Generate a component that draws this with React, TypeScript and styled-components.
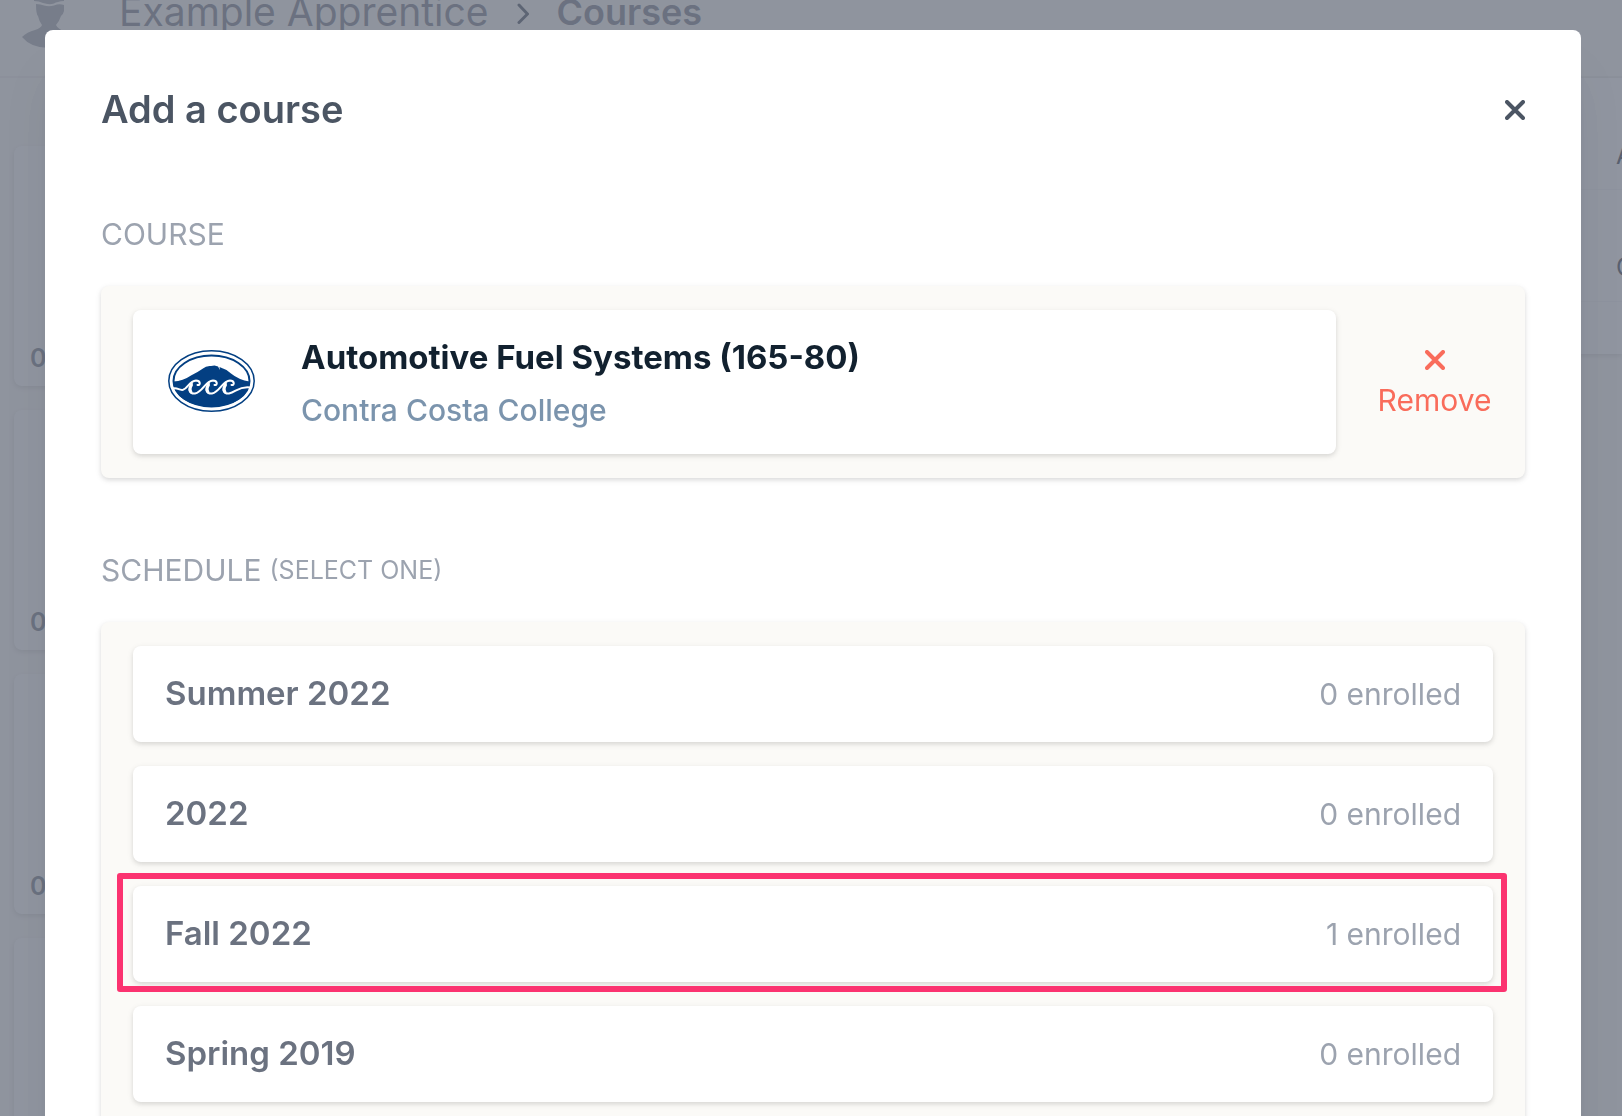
import React from "react";
import styled, { createGlobalStyle } from "styled-components";

const GlobalStyle = createGlobalStyle`
  *, *::before, *::after { box-sizing: border-box; }
  body {
    margin: 0;
    background: #fbfaf7;
    color: #6b7280;
    font-family: Inter, "Open Sans", sans-serif;
    -webkit-font-smoothing: antialiased;
  }
  h1, h2, h3, p, ul, ol { margin: 0; padding: 0; }
  ul, ol { list-style: none; }
  button { font: inherit; color: inherit; border: 0; background: none; padding: 0; cursor: pointer; text-align: left; }
`;

const cardShadow = "0 2px 6px rgba(0, 0, 0, 0.1), 0 2px 4px rgba(0, 0, 0, 0.06)";

const Page = styled.div`
  height: 100vh;
  overflow: hidden;
`;

const TopBar = styled.header`
  display: flex;
  align-items: flex-start;
  gap: 50px;
  height: 78px;
  padding-left: 21px;
  border-bottom: 2px solid #edecea;
`;

const Breadcrumb = styled.ol`
  display: flex;
  align-items: center;
  gap: 28px;
  line-height: 24px;
  white-space: nowrap;
`;

const Crumb = styled.li<{ $current?: boolean }>`
  display: flex;
  align-items: center;
  font-size: ${(p) => (p.$current ? 36 : 39)}px;
  font-weight: ${(p) => (p.$current ? 600 : 400)};
`;

const Columns = styled.div`
  display: flex;
  align-items: flex-start;
  gap: 24px;
  padding-left: 14px;
`;

const CardList = styled.ul`
  flex: 1;
  display: grid;
  gap: 24px;
  padding-top: 68px;
`;

const CountCard = styled.li`
  display: flex;
  align-items: flex-end;
  height: 240px;
  padding: 12px 16px;
  border-radius: 8px;
  background: #fff;
  box-shadow: ${cardShadow};
  font-size: 25px;
  line-height: 32px;
  font-weight: 600;
`;

const SideNav = styled.ul`
  flex: 0 0 60px;
  height: 276px;
  overflow: hidden;
  background: #fff;
  box-shadow: ${cardShadow};
  color: #252f3f;
`;

const SideItem = styled.li`
  height: 112px;
  padding: 61px 0 0 54px;
  border-bottom: 1px solid #f4f4f5;
  font-size: 25px;
  line-height: 32px;
`;

const Overlay = styled.div`
  position: fixed;
  inset: 0;
  padding: 30px 41px 0 45px;
  overflow: auto;
  scrollbar-width: none;
  background: rgba(107, 114, 128, 0.75);
`;

const Modal = styled.section`
  min-height: 100%;
  padding: 56px;
  border-radius: 8px;
  background: #fff;
  box-shadow: 0 40px 50px -10px rgba(0, 0, 0, 0.1), 0 20px 20px -10px rgba(0, 0, 0, 0.04);
`;

const ModalHeader = styled.header`
  display: flex;
  align-items: center;
  justify-content: space-between;
  margin-bottom: 80px;
`;

const Title = styled.h1`
  padding-bottom: 2px;
  color: #4b5563;
  font-size: 38px;
  line-height: 46px;
  font-weight: 600;
`;

const IconButton = styled.button`
  display: flex;
  color: #4b5563;
`;

const Group = styled.section`
  & + & { margin-top: 72px; }
`;

const GroupLabel = styled.h2`
  display: flex;
  align-items: center;
  gap: 8px;
  margin-bottom: 32px;
  color: #9ca3af;
  font-size: 30px;
  line-height: 40px;
  font-weight: 400;
  text-transform: uppercase;
`;

const Hint = styled.span`
  font-size: 25px;
`;

const Panel = styled.div`
  display: flex;
  gap: 40px;
  padding: 24px 32px;
  border-radius: 8px;
  background: #fbfaf7;
  box-shadow: ${cardShadow};
`;

const CourseCard = styled.article`
  flex: 1;
  display: flex;
  align-items: center;
  gap: 40px;
  min-height: 144px;
  padding: 24px 32px;
  border-radius: 8px;
  background: #fff;
  box-shadow: ${cardShadow};
`;

const CourseText = styled.div`
  display: grid;
  gap: 10px;
`;

const CourseName = styled.h3`
  color: #12212f;
  font-size: 33px;
  line-height: 46px;
  font-weight: 700;
`;

const College = styled.p`
  color: #7b94ad;
  font-size: 30px;
  line-height: 40px;
  font-weight: 500;
`;

const RemoveButton = styled.button`
  flex: 0 0 117px;
  display: flex;
  flex-direction: column;
  align-items: center;
  justify-content: center;
  gap: 14px;
  padding-top: 2px;
  color: #f96c5b;
  font-size: 30px;
  line-height: 32px;
`;

const TermList = styled.ul`
  flex: 1;
  display: grid;
  gap: 24px;
`;

const TermItem = styled.li`
  position: relative;
`;

const TermButton = styled.button`
  display: flex;
  align-items: baseline;
  justify-content: space-between;
  width: 100%;
  padding: 23px 32px 25px;
  border-radius: 8px;
  background: #fff;
  box-shadow: ${cardShadow};
`;

const TermName = styled.span`
  color: #6b7280;
  font-size: 33px;
  line-height: 48px;
  font-weight: 600;
`;

const Enrolled = styled.span`
  color: #9ca3af;
  font-size: 30px;
  line-height: 40px;
`;

const Marker = styled.span`
  position: absolute;
  inset: -13px -14px -10px -16px;
  border: 6px solid #fb3370;
  border-radius: 3px;
  pointer-events: none;
`;

function Cross() {
  return (
    <svg width="20" height="20" viewBox="0 0 20 20" fill="none" stroke="currentColor" strokeWidth="4" strokeLinecap="round" aria-hidden="true">
      <path d="M2 2 18 18M18 2 2 18" />
    </svg>
  );
}

function Chevron() {
  return (
    <svg width="12" height="24" viewBox="0 0 12 24" fill="none" stroke="#374151" strokeWidth="3" strokeLinecap="round" strokeLinejoin="round" aria-hidden="true">
      <path d="M2 5 10.500 14 2 22.500" />
    </svg>
  );
}

function Avatar() {
  return (
    <svg width="48" height="48" viewBox="0 0 48 48" fill="#9a9fa8" aria-hidden="true">
      <path d="M13 0H43V1Q36 1.500 33 3.500Q28 5 22 3Q18 1 13 1Z" />
      <path d="M15 4Q20 4 23 5.500Q28 7 33 5.500Q38 3.500 43 5V11Q42 15 40 16Q38 22 35 25Q37 29 43 31Q52 34 55 37Q46 48 28 48Q10 48 1 37Q6 32 14 30Q20 28 21 25Q18 21 17 16Q15 14 15 4Z" />
    </svg>
  );
}

function CollegeLogo() {
  return (
    <svg width="96" height="64" viewBox="0 0 96 64" role="img" aria-label="Contra Costa College logo">
      <ellipse cx="46.500" cy="31" rx="42.700" ry="30.200" fill="#fff" stroke="#033f82" strokeWidth="1.500" />
      <ellipse cx="46.500" cy="31" rx="38" ry="25.500" fill="#fff" stroke="#033f82" strokeWidth="2" />
      <path
        fill="#033f82"
        d="M8.500 31.500Q18 31 26 25.500Q33 22 38 18.500Q41 15.500 46 16L49.500 15.500L53 16.500L55 20L54.500 17Q61 19 66 23.500Q74 30 84.500 31.500C84.500 46 69 56.500 46.500 56.500S8.500 46 8.500 31.500Z"
      />
      <g fill="none" stroke="#fff" strokeWidth="2" strokeLinecap="round">
        <path d="M8 38.500C13 37.500 14 40.500 18 39.800C23 38.500 24 31 31 30.500C35.500 30.500 36 35.500 32.500 35" />
        <path d="M27 33C22 40 25 44 30 43.500C38 42 40 31 48 30.500C52.500 30.500 53 35.500 49.500 35" />
        <path d="M44 33C39 40 42 44 47 43.500C55 42 57 31 65 30.500C69.500 30.500 70 35.500 66.500 35" />
        <path d="M61 33C56 40 59 44 64 43.500C71 42 74 36 85 37.500" />
      </g>
      <g fill="none" stroke="#fff" strokeWidth="3" strokeLinecap="round">
        <path d="M26.500 35Q24 39 26 42" />
        <path d="M43.500 35Q41 39 43 42" />
        <path d="M60.500 35Q58 39 60 42" />
      </g>
    </svg>
  );
}

const terms = [
  { name: "Summer 2022", enrolled: 0 },
  { name: "2022", enrolled: 0 },
  { name: "Fall 2022", enrolled: 1, marked: true },
  { name: "Spring 2019", enrolled: 0 },
];

const counts = [0, 0, 0, 0];

export default function App() {
  return (
    <>
      <GlobalStyle />
      <Page>
        <TopBar>
          <Avatar />
          <Breadcrumb>
            <Crumb>Example Apprentice</Crumb>
            <Crumb><Chevron /></Crumb>
            <Crumb $current>Courses</Crumb>
          </Breadcrumb>
        </TopBar>
        <Columns>
          <CardList>
            {counts.map((count, i) => (
              <CountCard key={i}>{count}</CountCard>
            ))}
          </CardList>
          <SideNav>
            <SideItem>A</SideItem>
            <SideItem>C</SideItem>
          </SideNav>
        </Columns>
      </Page>

      <Overlay>
        <Modal role="dialog" aria-modal="true" aria-labelledby="modal-title">
          <ModalHeader>
            <Title id="modal-title">Add a course</Title>
            <IconButton type="button" aria-label="Close"><Cross /></IconButton>
          </ModalHeader>

          <Group>
            <GroupLabel>Course</GroupLabel>
            <Panel>
              <CourseCard>
                <CollegeLogo />
                <CourseText>
                  <CourseName>Automotive Fuel Systems (165-80)</CourseName>
                  <College>Contra Costa College</College>
                </CourseText>
              </CourseCard>
              <RemoveButton type="button">
                <Cross />
                Remove
              </RemoveButton>
            </Panel>
          </Group>

          <Group>
            <GroupLabel>
              Schedule <Hint>(select one)</Hint>
            </GroupLabel>
            <Panel>
              <TermList>
                {terms.map((term) => (
                  <TermItem key={term.name}>
                    <TermButton type="button">
                      <TermName>{term.name}</TermName>
                      <Enrolled>{term.enrolled} enrolled</Enrolled>
                    </TermButton>
                    {term.marked && <Marker />}
                  </TermItem>
                ))}
              </TermList>
            </Panel>
          </Group>
        </Modal>
      </Overlay>
    </>
  );
}
